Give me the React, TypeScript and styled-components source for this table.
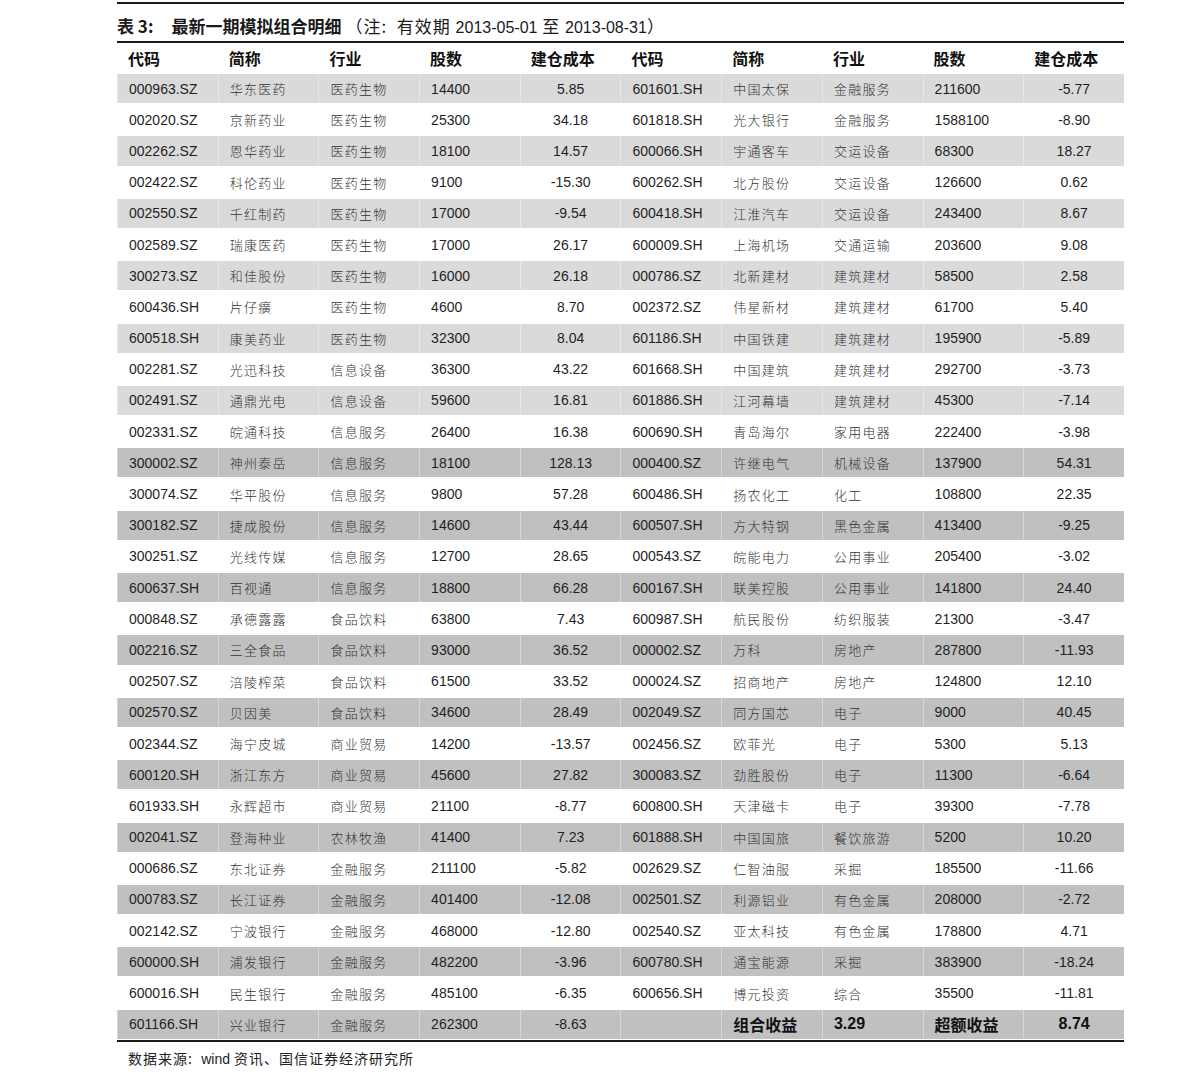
import React, { ReactElement } from "react";
import styled, { createGlobalStyle } from "styled-components";

const GlobalStyle = createGlobalStyle`
  body {
    margin: 0;
    background: #ffffff;
    font-family: "Liberation Sans", "Noto Sans CJK SC", sans-serif;
    color: #1a1a1a;
  }
`;

const CJK = `"Noto Sans CJK SC", "Noto Sans CJK JP", sans-serif`;
const LATIN = `"Liberation Sans", "Noto Sans CJK SC", sans-serif`;

const Page = styled.div`
  width: 1007px;
  margin-left: 117px;
  padding-top: 2px;
`;

const Title = styled.div`
  height: 41px;
  box-sizing: border-box;
  border-top: 2px solid #1a1a1a;
  border-bottom: 2px solid #1a1a1a;
  display: flex;
  align-items: flex-end;
  padding-bottom: 3px;
  font-size: 17px;
  white-space: nowrap;
`;

const TitleLabel = styled.span`
  font-family: ${CJK};
  font-weight: 700;
  margin-right: 18px;
`;

const TitleStrong = styled.span`
  font-family: ${CJK};
  font-weight: 700;
`;

const TitleNote = styled.span`
  font-family: ${CJK};
  font-weight: 400;
  letter-spacing: 1px;
  margin-left: 4px;
`;

const TitleDate = styled.span`
  font-family: ${LATIN};
  font-size: 16px;
  letter-spacing: 0;
`;

const Table = styled.div`
  border-bottom: 2px solid #1a1a1a;
`;

const Row = styled.div<{ $shade?: string }>`
  display: grid;
  grid-template-columns: repeat(10, 1fr);
  height: 31.2px;
  box-sizing: border-box;
  align-items: center;
  background: ${(p) => p.$shade ?? "transparent"};
  border-top: 1px solid #ffffff;
  border-bottom: 1px solid #ffffff;
`;

const HeaderRow = styled(Row)`
  height: 30px;
  border: none;
`;

const Cell = styled.div<{ $center?: boolean }>`
  height: 100%;
  display: flex;
  align-items: center;
  justify-content: ${(p) => (p.$center ? "center" : "flex-start")};
  padding-left: ${(p) => (p.$center ? "0" : "11px")};
  box-sizing: border-box;
  border-left: 1px solid rgba(255, 255, 255, 0.35);
  white-space: nowrap;
`;

const HeadCell = styled(Cell)`
  border-left: none;
  font-family: ${CJK};
  font-weight: 700;
  font-size: 16px;
  color: #111;
`;

const Num = styled.span`
  font-family: ${LATIN};
  font-size: 14px;
  color: #1f1f1f;
`;

const Name = styled.span`
  font-family: ${CJK};
  font-size: 13px;
  font-weight: 300;
  letter-spacing: 1.3px;
  color: #333333;
`;

const Strong = styled.span`
  font-family: ${CJK};
  font-weight: 700;
  font-size: 16px;
  color: #111;
`;

const StrongNum = styled.span`
  font-family: ${LATIN};
  font-weight: 700;
  font-size: 16px;
  color: #111;
`;

const Source = styled.div`
  padding: 6px 0 0 11px;
  font-size: 14px;
  font-family: ${CJK};
  color: #222;
  letter-spacing: 1px;
`;

const SourceLatin = styled.span`
  font-family: ${LATIN};
  letter-spacing: 0;
`;

type Half = [string, string, string, string, string];

const rows: [Half, Half | null][] = [
  [["000963.SZ", "华东医药", "医药生物", "14400", "5.85"], ["601601.SH", "中国太保", "金融服务", "211600", "-5.77"]],
  [["002020.SZ", "京新药业", "医药生物", "25300", "34.18"], ["601818.SH", "光大银行", "金融服务", "1588100", "-8.90"]],
  [["002262.SZ", "恩华药业", "医药生物", "18100", "14.57"], ["600066.SH", "宇通客车", "交运设备", "68300", "18.27"]],
  [["002422.SZ", "科伦药业", "医药生物", "9100", "-15.30"], ["600262.SH", "北方股份", "交运设备", "126600", "0.62"]],
  [["002550.SZ", "千红制药", "医药生物", "17000", "-9.54"], ["600418.SH", "江淮汽车", "交运设备", "243400", "8.67"]],
  [["002589.SZ", "瑞康医药", "医药生物", "17000", "26.17"], ["600009.SH", "上海机场", "交通运输", "203600", "9.08"]],
  [["300273.SZ", "和佳股份", "医药生物", "16000", "26.18"], ["000786.SZ", "北新建材", "建筑建材", "58500", "2.58"]],
  [["600436.SH", "片仔癀", "医药生物", "4600", "8.70"], ["002372.SZ", "伟星新材", "建筑建材", "61700", "5.40"]],
  [["600518.SH", "康美药业", "医药生物", "32300", "8.04"], ["601186.SH", "中国铁建", "建筑建材", "195900", "-5.89"]],
  [["002281.SZ", "光迅科技", "信息设备", "36300", "43.22"], ["601668.SH", "中国建筑", "建筑建材", "292700", "-3.73"]],
  [["002491.SZ", "通鼎光电", "信息设备", "59600", "16.81"], ["601886.SH", "江河幕墙", "建筑建材", "45300", "-7.14"]],
  [["002331.SZ", "皖通科技", "信息服务", "26400", "16.38"], ["600690.SH", "青岛海尔", "家用电器", "222400", "-3.98"]],
  [["300002.SZ", "神州泰岳", "信息服务", "18100", "128.13"], ["000400.SZ", "许继电气", "机械设备", "137900", "54.31"]],
  [["300074.SZ", "华平股份", "信息服务", "9800", "57.28"], ["600486.SH", "扬农化工", "化工", "108800", "22.35"]],
  [["300182.SZ", "捷成股份", "信息服务", "14600", "43.44"], ["600507.SH", "方大特钢", "黑色金属", "413400", "-9.25"]],
  [["300251.SZ", "光线传媒", "信息服务", "12700", "28.65"], ["000543.SZ", "皖能电力", "公用事业", "205400", "-3.02"]],
  [["600637.SH", "百视通", "信息服务", "18800", "66.28"], ["600167.SH", "联美控股", "公用事业", "141800", "24.40"]],
  [["000848.SZ", "承德露露", "食品饮料", "63800", "7.43"], ["600987.SH", "航民股份", "纺织服装", "21300", "-3.47"]],
  [["002216.SZ", "三全食品", "食品饮料", "93000", "36.52"], ["000002.SZ", "万科", "房地产", "287800", "-11.93"]],
  [["002507.SZ", "涪陵榨菜", "食品饮料", "61500", "33.52"], ["000024.SZ", "招商地产", "房地产", "124800", "12.10"]],
  [["002570.SZ", "贝因美", "食品饮料", "34600", "28.49"], ["002049.SZ", "同方国芯", "电子", "9000", "40.45"]],
  [["002344.SZ", "海宁皮城", "商业贸易", "14200", "-13.57"], ["002456.SZ", "欧菲光", "电子", "5300", "5.13"]],
  [["600120.SH", "浙江东方", "商业贸易", "45600", "27.82"], ["300083.SZ", "劲胜股份", "电子", "11300", "-6.64"]],
  [["601933.SH", "永辉超市", "商业贸易", "21100", "-8.77"], ["600800.SH", "天津磁卡", "电子", "39300", "-7.78"]],
  [["002041.SZ", "登海种业", "农林牧渔", "41400", "7.23"], ["601888.SH", "中国国旅", "餐饮旅游", "5200", "10.20"]],
  [["000686.SZ", "东北证券", "金融服务", "211100", "-5.82"], ["002629.SZ", "仁智油服", "采掘", "185500", "-11.66"]],
  [["000783.SZ", "长江证券", "金融服务", "401400", "-12.08"], ["002501.SZ", "利源铝业", "有色金属", "208000", "-2.72"]],
  [["002142.SZ", "宁波银行", "金融服务", "468000", "-12.80"], ["002540.SZ", "亚太科技", "有色金属", "178800", "4.71"]],
  [["600000.SH", "浦发银行", "金融服务", "482200", "-3.96"], ["600780.SH", "通宝能源", "采掘", "383900", "-18.24"]],
  [["600016.SH", "民生银行", "金融服务", "485100", "-6.35"], ["600656.SH", "博元投资", "综合", "35500", "-11.81"]],
  [["601166.SH", "兴业银行", "金融服务", "262300", "-8.63"], null],
];

const headers = ["代码", "简称", "行业", "股数", "建仓成本"];

const shadeFor = (i: number): string | undefined => {
  if (i % 2 === 1) return undefined;
  return i < 12 ? "#dadada" : "#c0c0c0";
};

const HalfCells = ({ d }: { d: Half }): ReactElement => (
  <>
    <Cell><Num>{d[0]}</Num></Cell>
    <Cell><Name>{d[1]}</Name></Cell>
    <Cell><Name>{d[2]}</Name></Cell>
    <Cell><Num>{d[3]}</Num></Cell>
    <Cell $center><Num>{d[4]}</Num></Cell>
  </>
);

const Summary = (): ReactElement => (
  <>
    <Cell />
    <Cell><Strong>组合收益</Strong></Cell>
    <Cell><StrongNum>3.29</StrongNum></Cell>
    <Cell><Strong>超额收益</Strong></Cell>
    <Cell $center><StrongNum>8.74</StrongNum></Cell>
  </>
);

const App = (): ReactElement => {
  return (
    <>
      <GlobalStyle />
      <Page>
        <Title>
          <TitleLabel>表 3:</TitleLabel>
          <TitleStrong>最新一期模拟组合明细</TitleStrong>
          <TitleNote>
            （注:&nbsp; 有效期 <TitleDate>2013-05-01</TitleDate> 至{" "}
            <TitleDate>2013-08-31</TitleDate>）
          </TitleNote>
        </Title>
        <Table>
          <HeaderRow>
            {[...headers, ...headers].map((h, i) => (
              <HeadCell key={i}>{h}</HeadCell>
            ))}
          </HeaderRow>
          {rows.map(([l, r], i) => (
            <Row key={l[0]} $shade={shadeFor(i)}>
              <HalfCells d={l} />
              {r ? <HalfCells d={r} /> : <Summary />}
            </Row>
          ))}
        </Table>
        <Source>
          数据来源:&nbsp; <SourceLatin>wind</SourceLatin> 资讯、国信证券经济研究所
        </Source>
      </Page>
    </>
  );
};

export default App;
